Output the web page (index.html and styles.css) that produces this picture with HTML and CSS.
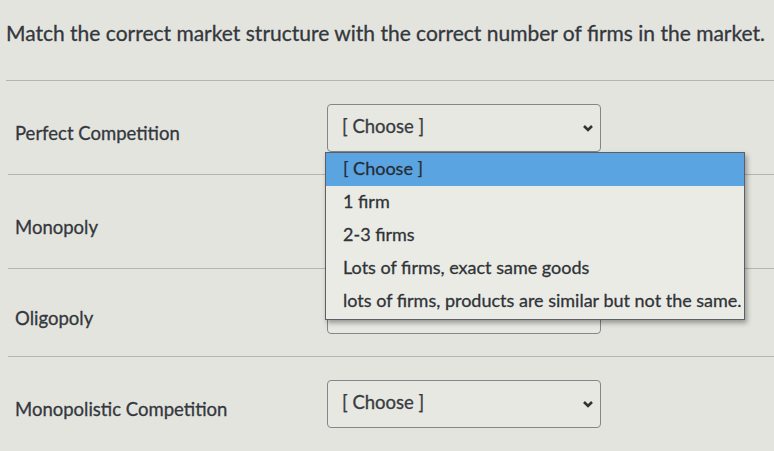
FILE: index.html
```html
<!DOCTYPE html>
<html lang="en">
<head>
  <meta charset="UTF-8">
  <meta name="viewport" content="width=device-width, initial-scale=1.0">
  <title>Matching Question</title>
  <link rel="stylesheet" href="styles.css">
</head>
<body>
  <div class="question">
    <div class="question-text">
      <p>Match the correct market structure with the correct number of firms in the market.</p>
    </div>

    <div class="answers">
      <!-- row 1, with the open list -->
      <div class="match-row">
        <div class="match-label">Perfect Competition</div>
        <div class="match-select open">
          <div class="select-box">
            <span>[ Choose ]</span>
            <svg class="chevron" width="12" height="8" viewBox="0 0 12 8"><polyline points="2,2 6,6 10,2" fill="none" stroke="#333" stroke-width="2.6"/></svg>
          </div>
          <ul class="option-list">
            <li class="selected">[ Choose ]</li>
            <li>1 firm</li>
            <li>2-3 firms</li>
            <li>Lots of firms, exact same goods</li>
            <li class="end">lots of firms, products are similar but not the same.</li>
          </ul>
        </div>
      </div>

      <div class="match-row">
        <div class="match-label">Monopoly</div>
        <div class="match-select">
          <div class="select-box">
            <span>[ Choose ]</span>
            <svg class="chevron" width="12" height="8" viewBox="0 0 12 8"><polyline points="2,2 6,6 10,2" fill="none" stroke="#333" stroke-width="2.6"/></svg>
          </div>
        </div>
      </div>

      <div class="match-row short">
        <div class="match-label">Oligopoly</div>
        <div class="match-select">
          <div class="select-box">
            <span>[ Choose ]</span>
            <svg class="chevron" width="12" height="8" viewBox="0 0 12 8"><polyline points="2,2 6,6 10,2" fill="none" stroke="#333" stroke-width="2.6"/></svg>
          </div>
        </div>
      </div>

      <div class="match-row last">
        <div class="match-label">Monopolistic Competition</div>
        <div class="match-select">
          <div class="select-box">
            <span>[ Choose ]</span>
            <svg class="chevron" width="12" height="8" viewBox="0 0 12 8"><polyline points="2,2 6,6 10,2" fill="none" stroke="#333" stroke-width="2.6"/></svg>
          </div>
        </div>
      </div>
    </div>
  </div>
</body>
</html>
```

FILE: styles.css
```css
body {
  font-family: Lato, "Open Sans", sans-serif;
  margin: 0;
  padding: 0;
  background: #e4e4df;
  color: #33383d;
  -webkit-text-stroke: 0.3px #33383d;
}

.question {
  padding-left: 6px;
}

.question-text {
  height: 80px;
  border-bottom: 1px solid #b4b4b0;
}

.question-text p {
  margin: 0;
  padding-top: 20px;
  font-size: 21px;
  line-height: 26px;
  white-space: nowrap;
}

.match-row {
  display: flex;
  align-items: center;
  height: 93px;
  margin-left: 2px;
  border-bottom: 1px solid #b4b4b0;
}

.match-row.short {
  height: 87px;
}

.match-row.short .match-select {
  align-self: flex-start;
  margin-top: 17px;
}

.match-row.last {
  border-bottom: none;
}

.match-label {
  width: 312px;
  padding-left: 7px;
  padding-top: 10px;
  font-size: 18.5px;
}

.match-select {
  position: relative;
}

.select-box {
  display: flex;
  align-items: center;
  justify-content: space-between;
  width: 252px;
  height: 46px;
  padding: 0 6px 0 14px;
  border: 1px solid #86868a;
  border-radius: 4px;
  background: #e8e8e3;
  font-size: 18.5px;
  color: #3a3d40;
}

.select-box span {
  margin-top: -4px;
}

.option-list {
  position: absolute;
  top: 48px;
  left: -2px;
  z-index: 5;
  width: 418px;
  margin: 0;
  padding: 0;
  list-style: none;
  background: #ebebe6;
  border: 1px solid #5c5f66;
  box-shadow: 2px 3px 5px rgba(0, 0, 0, 0.35);
}

.option-list li {
  height: 33px;
  line-height: 31px;
  padding-left: 17px;
  font-size: 18px;
  color: #2f3336;
  white-space: nowrap;
}

.option-list li.end {
  height: 34px;
}

.option-list li.selected {
  background: #5ba4e2;
  color: #1e2a35;
}
```
